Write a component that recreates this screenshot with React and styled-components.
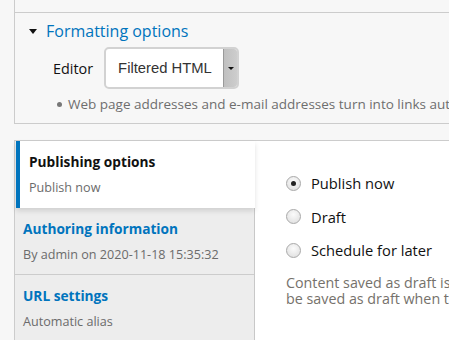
import React from 'react'
import styled, { createGlobalStyle } from 'styled-components'

const Global = createGlobalStyle`
  html, body {
    margin: 0;
    padding: 0;
    background: #f7f7f7;
    overflow: hidden;
  }
  body {
    font-family: "Open Sans", "DejaVu Sans", sans-serif;
    color: #222;
  }
`

const Page = styled.div`
  width: 700px;
  padding-left: 14px;
`

const TopBox = styled.div`
  height: 12px;
  border-left: 1px solid #cccccc;
  border-bottom: 1px solid #cccccc;
`

const FormatBox = styled.div`
  border-left: 1px solid #cccccc;
  border-bottom: 1px solid #cccccc;
  padding: 6px 0 10px 0;
`

const Summary = styled.div`
  display: flex;
  align-items: center;
  gap: 9px;
  padding-left: 14px;
  height: 24px;
  font-size: 16px;
  color: #0074bd;
`

const Caret = styled.span`
  width: 0;
  height: 0;
  border-left: 4px solid transparent;
  border-right: 4px solid transparent;
  border-top: 5px solid #111;
`

const EditorRow = styled.div`
  display: flex;
  align-items: center;
  gap: 11px;
  margin-top: 4px;
  padding-left: 38px;
  font-size: 14.4px;
  color: #111;
`

const Select = styled.div`
  display: flex;
  width: 131px;
  height: 38px;
  border: 2px solid #d2d2d2;
  border-radius: 5px;
  background: #fff;
  overflow: hidden;
`

const SelectText = styled.div`
  flex: 1;
  display: flex;
  align-items: center;
  padding-left: 12px;
  font-family: "Liberation Sans", Arial, sans-serif;
  font-size: 14.8px;
  color: #333;
`

const SelectButton = styled.div`
  width: 13px;
  display: flex;
  align-items: center;
  justify-content: center;
  background: linear-gradient(to right, #c0c0c0, #cdcdcd);
  border-left: 1px solid #9a9a9a;

  &::after {
    content: '';
    border-left: 3px solid transparent;
    border-right: 3px solid transparent;
    border-top: 3px solid #111;
  }
`

const Tip = styled.div`
  display: flex;
  align-items: center;
  gap: 6px;
  margin-top: 6px;
  padding-left: 42px;
  height: 18px;
  font-size: 13.5px;
  color: #6e6e6e;
  white-space: nowrap;

  &::before {
    content: '';
    width: 5px;
    height: 5px;
    border-radius: 50%;
    background: #777;
  }
`

const Tabs = styled.div`
  display: flex;
  margin-top: 16px;
  border-top: 1px solid #cccccc;
  border-left: 1px solid #cccccc;
  height: 220px;
`

const Menu = styled.div`
  flex: 0 0 239px;
  background: #ededed;
  border-right: 1px solid #c8c8c8;
  display: flex;
  flex-direction: column;
`

const MenuItem = styled.div`
  height: 67px;
  box-sizing: border-box;
  padding: 10px 8px 0 ${p => (p.$active ? '9px' : '8px')};
  border-bottom: ${p => (p.$active ? 'none' : '1px solid #cccccc')};
  background: ${p => (p.$active ? '#fff' : 'transparent')};
  margin-left: ${p => (p.$active ? '1px' : '0')};
  margin-right: ${p => (p.$active ? '-1px' : '0')};
  border-left: ${p => (p.$active ? '4px solid #0074bd' : 'none')};
  box-shadow: ${p => (p.$active ? '0 3px 5px rgba(0,0,0,0.12)' : 'none')};
  position: relative;
  z-index: ${p => (p.$active ? 1 : 0)};
`

const ItemTitle = styled.div`
  font-size: 13.7px;
  font-weight: 700;
  line-height: 22px;
  color: ${p => (p.$active ? '#111' : '#0074bd')};
`

const ItemSummary = styled.div`
  margin-top: 6px;
  font-size: 12.6px;
  line-height: 18px;
  color: #6b6b6b;
`

const Pane = styled.div`
  flex: 1;
  min-width: 0;
  background: #fff;
  padding: 33px 0 0 31px;
`

const RadioRow = styled.label`
  display: flex;
  align-items: center;
  gap: 10px;
  height: 18px;
  margin-bottom: 15.5px;
  font-size: 14.7px;
  color: #111;
`

const Radio = styled.span`
  width: 13px;
  height: 13px;
  border-radius: 50%;
  border: 1px solid #a9a9a9;
  background: radial-gradient(circle at 50% 35%, #fbfbfb, #dcdcdc);
  display: flex;
  align-items: center;
  justify-content: center;

  &::after {
    content: '';
    width: 5px;
    height: 5px;
    border-radius: 50%;
    background: ${p => (p.$checked ? '#222' : 'transparent')};
  }
`

const Description = styled.div`
  font-size: 14.3px;
  line-height: 16px;
  color: #75716b;
  white-space: nowrap;
`

const items = [
  { title: 'Publishing options', summary: 'Publish now', active: true },
  { title: 'Authoring information', summary: 'By admin on 2020-11-18 15:35:32' },
  { title: 'URL settings', summary: 'Automatic alias' },
]

const radios = [
  { label: 'Publish now', checked: true },
  { label: 'Draft' },
  { label: 'Schedule for later' },
]

export default function App() {
  return (
    <Page>
      <Global />
      <TopBox />
      <FormatBox>
        <Summary>
          <Caret />
          Formatting options
        </Summary>
        <EditorRow>
          Editor
          <Select>
            <SelectText>Filtered HTML</SelectText>
            <SelectButton />
          </Select>
        </EditorRow>
        <Tip>Web page addresses and e-mail addresses turn into links automatically.</Tip>
      </FormatBox>
      <Tabs>
        <Menu>
          {items.map(it => (
            <MenuItem key={it.title} $active={it.active}>
              <ItemTitle $active={it.active}>{it.title}</ItemTitle>
              <ItemSummary>{it.summary}</ItemSummary>
            </MenuItem>
          ))}
        </Menu>
        <Pane>
          {radios.map(r => (
            <RadioRow key={r.label}>
              <Radio $checked={r.checked} />
              {r.label}
            </RadioRow>
          ))}
          <Description>
            Content saved as draft is only visible to users with permission. Content will
            <br />
            be saved as draft when the scheduled time has not been reached.
          </Description>
        </Pane>
      </Tabs>
    </Page>
  )
}
